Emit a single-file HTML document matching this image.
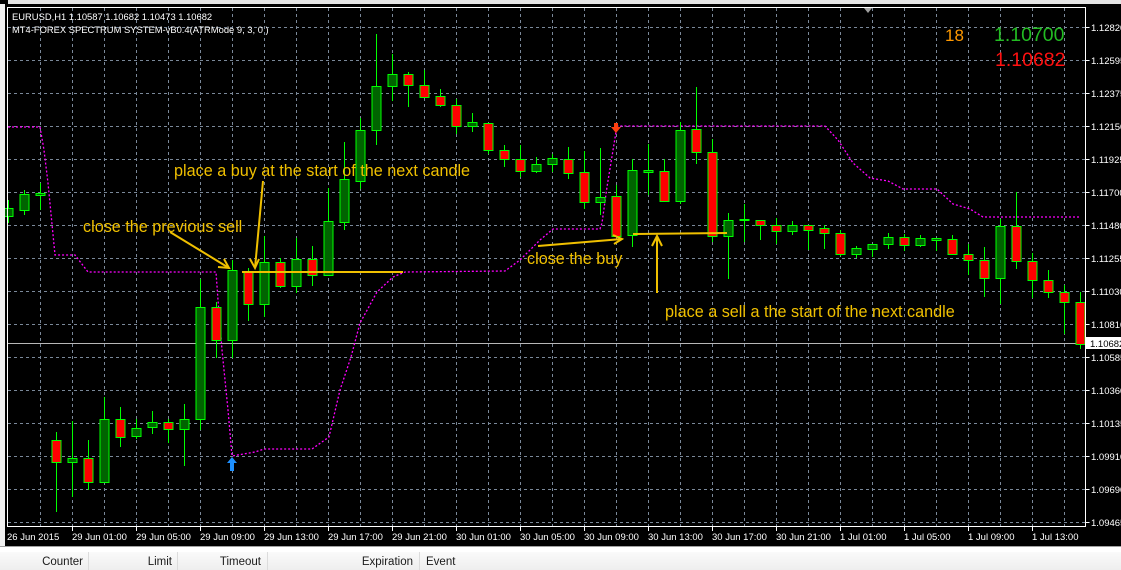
<!DOCTYPE html>
<html><head><meta charset="utf-8"><style>
html,body{margin:0;padding:0;width:1121px;height:570px;overflow:hidden;background:#f0f0f0;font-family:"Liberation Sans",sans-serif}
svg{position:absolute;left:0;top:0}
</style></head><body>
<svg width="1121" height="570" viewBox="0 0 1121 570" xmlns="http://www.w3.org/2000/svg" font-family="Liberation Sans, sans-serif">
<rect x="0" y="0" width="1121" height="570" fill="#f0f0f0"/>
<rect x="0" y="0" width="1121" height="4" fill="#e4e4e4"/>
<rect x="5" y="4" width="1116" height="542" fill="#000"/>
<polygon points="864,8 872,8 868,13" fill="#a0a0a0"/>
<!-- grid -->
<g stroke="#7a8899" stroke-width="1" stroke-dasharray="3,3" fill="none">
<path d="M40.5 8V526M72.5 8V526M104.5 8V526M136.5 8V526M168.5 8V526M200.5 8V526M232.5 8V526M264.5 8V526M296.5 8V526M328.5 8V526M360.5 8V526M392.5 8V526M424.5 8V526M456.5 8V526M488.5 8V526M520.5 8V526M552.5 8V526M584.5 8V526M616.5 8V526M648.5 8V526M680.5 8V526M712.5 8V526M744.5 8V526M776.5 8V526M808.5 8V526M840.5 8V526M872.5 8V526M904.5 8V526M936.5 8V526M968.5 8V526M1000.5 8V526M1032.5 8V526M1064.5 8V526"/>
<path d="M8 27.5H1090M8 60.5H1090M8 93.5H1090M8 126.5H1090M8 159.5H1090M8 192.5H1090M8 225.5H1090M8 258.5H1090M8 291.5H1090M8 324.5H1090M8 357.5H1090M8 390.5H1090M8 423.5H1090M8 456.5H1090M8 489.5H1090M8 522.5H1090"/>
</g>
<!-- current price line -->
<line x1="8" y1="343.5" x2="1086" y2="343.5" stroke="#b8b8b8" stroke-width="1"/>
<!-- indicator -->
<polyline fill="none" stroke="#ff00ff" stroke-width="1.3" stroke-dasharray="2,2" points="8,127 40,127 44,150 48,183 55,255 75,255 88,272 216,272 218,300 222,350 228,410 232,456 255,452 264,449 312,449 329,437 340,390 351,357 360,323 377,292 393,277 405,272 505,271 520,260 540,240 553,229 600,229 602,223 607,187 615,138 617,126 825,126 838,140 853,163 870,178 888,181 903,189 937,189 953,204 970,209 983,217 1080,217"/>
<!-- wicks -->
<path stroke="#00ff00" stroke-width="1" fill="none" d="M8.5 200V223M24.5 190V215M40.5 183V210M56.5 432V512M72.5 421V497M88.5 440V490M104.5 397V482M120.5 407V447M136.5 419V439M152.5 411V434M168.5 419V443M184.5 404V466M200.5 279V430M216.5 302V358M232.5 260V358M248.5 268V321M264.5 236V317M280.5 258V288M296.5 238V293M312.5 246V286M328.5 188V275M344.5 142V230M360.5 118V189M376.5 34V145M392.5 54V101M408.5 72V107M424.5 70V97M440.5 89V107M456.5 99V134M472.5 113V132M488.5 123V154M504.5 145V167M520.5 145V177M536.5 157V173M552.5 154V172M568.5 147V179M584.5 151V209M600.5 148V215M616.5 185V236M632.5 159V247M648.5 144V195M664.5 159V201M680.5 122V204M696.5 87V164M712.5 139V242M728.5 213V279M744.5 204V242M760.5 220V240M776.5 218V244M792.5 221V235M808.5 225V250M824.5 225V249M840.5 230V256M856.5 246V258M872.5 244V257M888.5 233V249M904.5 234V251M920.5 235V247M936.5 238V251M952.5 235V254M968.5 244V275M984.5 247V297M1000.5 219V304M1016.5 192V269M1032.5 253V298M1048.5 270V298M1064.5 285V334M1080.5 292V349"/>
<!-- bodies -->
<g stroke="#00ff00" stroke-width="1">
<g fill="#006400">
<rect x="4" y="208.5" width="9" height="8"/><rect x="20" y="194.5" width="9" height="16"/><rect x="36" y="193.5" width="9" height="2"/>
<rect x="68" y="458.5" width="9" height="4"/><rect x="100" y="419.5" width="9" height="63"/><rect x="132" y="428.5" width="9" height="8"/>
<rect x="148" y="422.5" width="9" height="5"/><rect x="180" y="419.5" width="9" height="10"/><rect x="196" y="307.5" width="9" height="112"/>
<rect x="228" y="270.5" width="9" height="70"/><rect x="260" y="262.5" width="9" height="42"/><rect x="292" y="259.5" width="9" height="27"/>
<rect x="324" y="221.5" width="9" height="54"/><rect x="340" y="179.5" width="9" height="43"/><rect x="356" y="130.5" width="9" height="51"/>
<rect x="372" y="86.5" width="9" height="44"/><rect x="388" y="74.5" width="9" height="12"/><rect x="468" y="122.5" width="9" height="4"/>
<rect x="532" y="164.5" width="9" height="7"/><rect x="548" y="158.5" width="9" height="6"/><rect x="596" y="197.5" width="9" height="5"/>
<rect x="628" y="170.5" width="9" height="65"/><rect x="644" y="170.5" width="9" height="2"/><rect x="676" y="130.5" width="9" height="71"/>
<rect x="724" y="220.5" width="9" height="16"/><rect x="740" y="219.5" width="9" height="1"/><rect x="788" y="225.5" width="9" height="6"/>
<rect x="852" y="248.5" width="9" height="6"/><rect x="868" y="244.5" width="9" height="5"/><rect x="884" y="237.5" width="9" height="7"/>
<rect x="916" y="238.5" width="9" height="7"/><rect x="932" y="238.5" width="9" height="2"/><rect x="996" y="226.5" width="9" height="52"/>
</g>
<g fill="#ff0000">
<rect x="52" y="440.5" width="9" height="22"/><rect x="84" y="458.5" width="9" height="24"/><rect x="116" y="419.5" width="9" height="18"/>
<rect x="164" y="422.5" width="9" height="7"/><rect x="212" y="307.5" width="9" height="33"/><rect x="244" y="271.5" width="9" height="33"/>
<rect x="276" y="262.5" width="9" height="24"/><rect x="308" y="259.5" width="9" height="16"/><rect x="404" y="74.5" width="9" height="11"/>
<rect x="420" y="85.5" width="9" height="12"/><rect x="436" y="96.5" width="9" height="9"/><rect x="452" y="105.5" width="9" height="21"/>
<rect x="484" y="123.5" width="9" height="27"/><rect x="500" y="150.5" width="9" height="9"/><rect x="516" y="159.5" width="9" height="12"/>
<rect x="564" y="159.5" width="9" height="14"/><rect x="580" y="172.5" width="9" height="30"/><rect x="612" y="196.5" width="9" height="40"/>
<rect x="660" y="171.5" width="9" height="30"/><rect x="692" y="129.5" width="9" height="23"/><rect x="708" y="152.5" width="9" height="84"/>
<rect x="756" y="220.5" width="9" height="5"/><rect x="772" y="225.5" width="9" height="6"/><rect x="804" y="225.5" width="9" height="5"/>
<rect x="820" y="228.5" width="9" height="5"/><rect x="836" y="233.5" width="9" height="21"/><rect x="900" y="237.5" width="9" height="8"/>
<rect x="948" y="239.5" width="9" height="15"/><rect x="964" y="254.5" width="9" height="6"/><rect x="980" y="260.5" width="9" height="18"/>
<rect x="1012" y="226.5" width="9" height="35"/><rect x="1028" y="261.5" width="9" height="19"/><rect x="1044" y="280.5" width="9" height="12"/>
<rect x="1060" y="292.5" width="9" height="10"/><rect x="1076" y="302.5" width="9" height="42"/>
</g></g>
<!-- arrows -->
<path d="M232 457 L237 463 L234 463 L234 471 L230 471 L230 463 L227 463 Z" fill="#1e90ff"/>
<path d="M616 133 L621 127 L618 127 L618 123 L614 123 L614 127 L611 127 Z" fill="#ff4010"/>
<!-- chart border -->
<rect x="7.5" y="7.5" width="1078" height="519" fill="none" stroke="#fff" stroke-width="1"/>
<rect x="0" y="0" width="8" height="7" fill="#000"/>
<rect x="0" y="4" width="5" height="542" fill="#f0f0f0"/>
<!-- annotations -->
<g stroke="#f0c000" stroke-width="2" fill="none">
<line x1="242" y1="272" x2="403" y2="272"/>
<line x1="170" y1="232" x2="229" y2="268"/><polyline points="218,267 229,268 224,259"/>
<line x1="263" y1="181" x2="255" y2="268"/><polyline points="250,259 255,268 259,259"/>
<line x1="538" y1="246" x2="622" y2="239"/><polyline points="613,235 622,239 614,244"/>
<line x1="633" y1="234" x2="727" y2="233"/>
<line x1="657" y1="293" x2="657" y2="237"/><polyline points="652,246 657,236 662,246"/>
</g>
<g fill="#f0c000" font-size="16.2">
<text x="174" y="176">place  a buy at the start of the next candle</text>
<text x="83" y="232">close the previous sell</text>
<text x="527" y="264">close the buy</text>
<text x="665" y="317">place a sell a the start of the next candle</text>
</g>
<!-- info -->
<g fill="#fff" font-size="9.4">
<text x="12" y="20">EURUSD,H1  1.10587 1.10682 1.10473 1.10682</text>
<text x="12" y="33">MT4-FOREX SPECTRUM SYSTEM-vB0.4(ATRMode 9, 3, 0 )</text>
</g>
<text x="945" y="41" font-size="17" fill="#ff9900">18</text>
<text x="994" y="41" font-size="19.5" fill="#22bb22">1.10700</text>
<text x="995" y="66" font-size="19.5" fill="#ff1010">1.10682</text>
<!-- price axis -->
<g stroke="#fff"><path d="M1086 27.5h3M1086 60.5h3M1086 93.5h3M1086 126.5h3M1086 159.5h3M1086 192.5h3M1086 225.5h3M1086 258.5h3M1086 291.5h3M1086 324.5h3M1086 357.5h3M1086 390.5h3M1086 423.5h3M1086 456.5h3M1086 489.5h3M1086 522.5h3"/></g>
<g fill="#fff" font-size="9.5">
<text x="1091" y="31">1.12820</text><text x="1091" y="64">1.12595</text><text x="1091" y="97">1.12375</text><text x="1091" y="130">1.12150</text>
<text x="1091" y="163">1.11925</text><text x="1091" y="196">1.11700</text><text x="1091" y="229">1.11480</text><text x="1091" y="262">1.11255</text>
<text x="1091" y="295">1.11030</text><text x="1091" y="328">1.10810</text><text x="1091" y="361">1.10585</text><text x="1091" y="394">1.10360</text>
<text x="1091" y="427">1.10135</text><text x="1091" y="460">1.09910</text><text x="1091" y="493">1.09690</text><text x="1091" y="526">1.09465</text>
</g>
<rect x="1086" y="337" width="35" height="12" fill="#fff"/>
<text x="1090" y="347" font-size="9.5" fill="#000">1.10682</text>
<!-- time axis -->
<g stroke="#fff"><path d="M72.5 527v4M136.5 527v4M200.5 527v4M264.5 527v4M328.5 527v4M392.5 527v4M456.5 527v4M520.5 527v4M584.5 527v4M648.5 527v4M712.5 527v4M776.5 527v4M840.5 527v4M904.5 527v4M968.5 527v4M1032.5 527v4"/></g>
<g fill="#fff" font-size="9.5">
<text x="7" y="540">26 Jun 2015</text>
<text x="72" y="540">29 Jun 01:00</text><text x="136" y="540">29 Jun 05:00</text><text x="200" y="540">29 Jun 09:00</text><text x="264" y="540">29 Jun 13:00</text>
<text x="328" y="540">29 Jun 17:00</text><text x="392" y="540">29 Jun 21:00</text><text x="456" y="540">30 Jun 01:00</text><text x="520" y="540">30 Jun 05:00</text>
<text x="584" y="540">30 Jun 09:00</text><text x="648" y="540">30 Jun 13:00</text><text x="712" y="540">30 Jun 17:00</text><text x="776" y="540">30 Jun 21:00</text>
<text x="840" y="540">1 Jul 01:00</text><text x="904" y="540">1 Jul 05:00</text><text x="968" y="540">1 Jul 09:00</text><text x="1032" y="540">1 Jul 13:00</text>
</g>
<!-- bottom panel -->
<rect x="0" y="546" width="1121" height="1" fill="#a0a0a0"/>
<rect x="0" y="547" width="1121" height="5" fill="#ffffff"/>
<defs><linearGradient id="hd" x1="0" y1="0" x2="0" y2="1"><stop offset="0" stop-color="#fafafa"/><stop offset="1" stop-color="#eeeeee"/></linearGradient></defs>
<rect x="0" y="552" width="1121" height="18" fill="url(#hd)"/>
<g stroke="#dcdcdc"><path d="M88.5 552v18M177.5 552v18M267.5 552v18M419.5 552v18"/></g>
<g fill="#1a1a1a" font-size="11.5" text-anchor="end">
<text x="83" y="565">Counter</text><text x="172" y="565">Limit</text><text x="261" y="565">Timeout</text><text x="413" y="565">Expiration</text>
</g>
<text x="426" y="565" font-size="11.5" fill="#1a1a1a">Event</text>
</svg>
</body></html>
